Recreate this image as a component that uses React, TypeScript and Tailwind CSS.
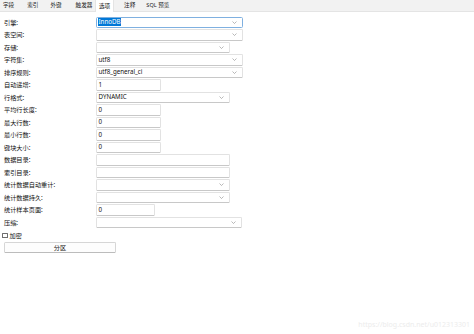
import React from "react";

const font = { fontFamily: '"Noto Sans", "Noto Sans CJK SC", sans-serif' };

function Chevron() {
  return (
    <svg width="5" height="3" viewBox="0 0 5 3" className="shrink-0">
      <path d="M0.5 0.5 L2.5 2.5 L4.5 0.5" fill="none" stroke="#8a8a8a" strokeWidth="0.6" />
    </svg>
  );
}

type Field = {
  label: string;
  kind: "combo" | "input";
  w: string;
  value?: string;
  focus?: boolean;
};

const fields: Field[] = [
  { label: "引擎:", kind: "combo", w: "w-[147px]", value: "InnoDB", focus: true },
  { label: "表空间:", kind: "combo", w: "w-[147px]" },
  { label: "存储:", kind: "combo", w: "w-[134px]" },
  { label: "字符集:", kind: "combo", w: "w-[147px]", value: "utf8" },
  { label: "排序规则:", kind: "combo", w: "w-[147px]", value: "utf8_general_ci" },
  { label: "自动递增:", kind: "input", w: "w-[65px]", value: "1" },
  { label: "行格式:", kind: "combo", w: "w-[134px]", value: "DYNAMIC" },
  { label: "平均行长度:", kind: "input", w: "w-[65px]", value: "0" },
  { label: "最大行数:", kind: "input", w: "w-[65px]", value: "0" },
  { label: "最小行数:", kind: "input", w: "w-[65px]", value: "0" },
  { label: "键块大小:", kind: "input", w: "w-[65px]", value: "0" },
  { label: "数据目录:", kind: "input", w: "w-[134px]" },
  { label: "索引目录:", kind: "input", w: "w-[134px]" },
  { label: "统计数据自动重计:", kind: "combo", w: "w-[134px]" },
  { label: "统计数据持久:", kind: "combo", w: "w-[134px]" },
  { label: "统计样本页面:", kind: "input", w: "w-[59px]", value: "0" },
  { label: "压缩:", kind: "combo", w: "w-[146px]" },
];

function Control({ f }: { f: Field }) {
  const border = f.focus
    ? "border border-[#7fb0e0]"
    : "border border-[#e2e2e2] border-b-[#c8c8c8]";
  return (
    <div
      className={`${f.w} h-[11.5px] ${border} bg-white rounded-[1.5px] flex items-center pl-[1px] pr-[5px]`}
    >
      <div className="flex-1 flex items-center min-w-0">
        {f.value &&
          (f.focus ? (
            <span className="bg-[#0078d7] text-white px-[0.5px] leading-[8px]">{f.value}</span>
          ) : (
            <span className="text-[#111] pl-[0.5px] leading-[8px]">{f.value}</span>
          ))}
      </div>
      {f.kind === "combo" && <Chevron />}
    </div>
  );
}

export default function App() {
  const tabs = [
    { t: "字段", ml: "ml-[3px]" },
    { t: "索引", ml: "ml-[13px]" },
    { t: "外键", ml: "ml-[12px]" },
    { t: "触发器", ml: "ml-[14px]" },
    { t: "选项", ml: "ml-[2.5px]", active: true },
    { t: "注释", ml: "ml-[10px]" },
    { t: "SQL 预览", ml: "ml-[11px]" },
  ];
  return (
    <div className="w-[474px] h-[334px] bg-white relative overflow-hidden text-[6.2px] text-[#111]" style={font}>
      <div className="h-[12px] bg-[#f2f2f2] border-b border-[#e4e4e4] flex items-stretch text-[5.6px]">
        {tabs.map((tb) =>
          tb.active ? (
            <div key={tb.t} className={`${tb.ml} px-[3px] bg-white flex items-center border-x border-[#e4e4e4] -mb-[1px]`}>
              {tb.t}
            </div>
          ) : (
            <div key={tb.t} className={`${tb.ml} flex items-center text-[#222]`}>
              {tb.t}
            </div>
          )
        )}
      </div>
      <div className="pt-[4.7px] flex flex-col">
        {fields.map((f) => (
          <div key={f.label} className="h-[12.5px] flex items-start">
            <div className="w-[96px] pl-[4px] h-[11.5px] flex items-center">{f.label}</div>
            <Control f={f} />
          </div>
        ))}
        <div className="h-[12.5px] flex items-center pl-[2px]">
          <div className="w-[5.5px] h-[5.5px] border border-[#6e6e6e] rounded-[0.5px] bg-white" />
          <span className="ml-[2px]">加密</span>
        </div>
        <div className="pl-[4px]">
          <div className="w-[112px] h-[11.5px] border border-[#d6d6d6] border-b-[#bcbcbc] rounded-[1.5px] bg-[#fdfdfd] flex items-center justify-center">
            分区
          </div>
        </div>
      </div>
      <div className="absolute right-[4px] bottom-[4px] text-[7px] text-[#ececec]">
        https://blog.csdn.net/u012313301
      </div>
    </div>
  );
}
